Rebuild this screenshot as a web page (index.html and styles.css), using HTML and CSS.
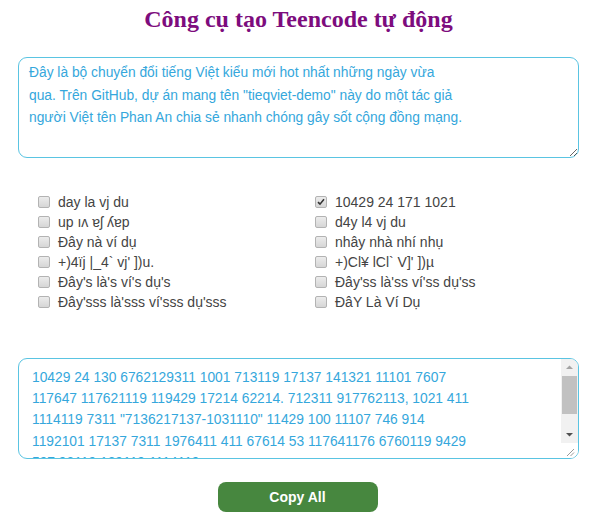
FILE: index.html
```
<!DOCTYPE html>
<html lang="vi">
<head>
<meta charset="utf-8">
<title>Công cụ tạo Teencode tự động</title>
<link rel="stylesheet" href="styles.css">
</head>
<body>
<main class="page">
  <h1 class="title">Công cụ tạo Teencode tự động</h1>
  <textarea class="box box-input">Đây là bộ chuyển đổi tiếng Việt kiểu mới hot nhất những ngày vừa
qua. Trên GitHub, dự án mang tên "tieqviet-demo" này do một tác giả
người Việt tên Phan An chia sẻ nhanh chóng gây sốt cộng đồng mạng.</textarea>

  <div class="options">
    <label class="opt"><input type="checkbox"><span>day la vj du</span></label>
    <label class="opt"><input type="checkbox" checked><span>10429 24 171 1021</span></label>
    <label class="opt"><input type="checkbox"><span>up ıʌ ɐʃ ʎɐp</span></label>
    <label class="opt"><input type="checkbox"><span>d4y l4 vj du</span></label>
    <label class="opt"><input type="checkbox"><span>Đây nà ví dụ</span></label>
    <label class="opt"><input type="checkbox"><span>nhây nhà nhí nhụ</span></label>
    <label class="opt"><input type="checkbox"><span>+)4ïj |_4` vj' ])u.</span></label>
    <label class="opt"><input type="checkbox"><span>+)Cl¥ lCl` V]' ])µ</span></label>
    <label class="opt"><input type="checkbox"><span>Đây's là's ví's dụ's</span></label>
    <label class="opt"><input type="checkbox"><span>Đây'ss là'ss ví'ss dụ'ss</span></label>
    <label class="opt"><input type="checkbox"><span>Đây'sss là'sss ví'sss dụ'sss</span></label>
    <label class="opt"><input type="checkbox"><span>ĐâY Là Ví Dụ</span></label>
  </div>

  <div class="box box-output">
    <textarea class="out-text">10429 24 130 6762129311 1001 713119 17137 141321 11101 7607
117647 117621119 119429 17214 62214. 712311 917762113, 1021 411
1114119 7311 "7136217137-1031110" 11429 100 11107 746 914
1192101 17137 7311 1976411 411 67614 53 117641176 6760119 9429
597 93119 129119 1114119.</textarea>
    <div class="sb" aria-hidden="true">
      <div class="sb-btn">
        <svg width="17" height="17" viewBox="0 0 17 17"><path d="M5 10 L8.5 6.5 L12 10 Z" fill="#a3a3a3"/></svg>
      </div>
      <div class="sb-track"><div class="sb-thumb"></div></div>
      <div class="sb-btn">
        <svg width="17" height="17" viewBox="0 0 17 17"><path d="M5 7 L8.5 10.5 L12 7 Z" fill="#505050"/></svg>
      </div>
      <div class="sb-corner">
        <svg width="15" height="15" viewBox="0 0 15 15"><path d="M13 6 L6 13 M13 9.5 L9.5 13" stroke="#9a9a9a" stroke-width="1" fill="none"/></svg>
      </div>
    </div>
  </div>

  <div class="actions">
    <button class="btn" type="button">Copy All</button>
  </div>
</main>
</body>
</html>
```

FILE: styles.css
```
html, body {
  margin: 0;
  padding: 0;
  background: #ffffff;
}

.page {
  padding: 0 21px 0 18px;
  font-family: "Liberation Sans", Arial, sans-serif;
}

.title {
  margin: 0;
  padding-top: 5px;
  height: 52px;
  box-sizing: border-box;
  text-align: center;
  font-family: "Liberation Serif", "Times New Roman", serif;
  font-weight: bold;
  font-size: 24px;
  line-height: 28px;
  color: #7d0c7d;
}

.box {
  display: block;
  width: 561px;
  height: 101px;
  box-sizing: border-box;
  margin: 0;
  border: 1.5px solid #5ac4e2;
  border-radius: 9px;
  background: #ffffff;
  color: #35a7dc;
  font-family: "Liberation Sans", Arial, sans-serif;
  font-size: 13.8px;
  outline: none;
}

.box-input {
  margin-top: 5px;
  padding: 4px 10px;
  line-height: 22.5px;
  overflow: hidden;
}

.options {
  display: grid;
  grid-template-columns: 277px 1fr;
  grid-auto-rows: 20px;
  padding: 0 0 0 20px;
  margin-top: 34px;
  font-size: 14px;
  color: #444444;
}

.opt {
  display: flex;
  align-items: center;
  gap: 8px;
}

.opt input {
  -webkit-appearance: none;
  appearance: none;
  width: 12px;
  height: 12px;
  margin: 0;
  border: 1px solid #b3b3b3;
  border-radius: 2px;
  background: linear-gradient(#ececec, #d6d6d6);
  flex: none;
}

.opt input:checked {
  background-image: url("data:image/svg+xml,%3Csvg xmlns='http://www.w3.org/2000/svg' viewBox='0 0 12 12'%3E%3Cpath d='M2.4 6.1 L4.8 8.6 L9.6 2.8' fill='none' stroke='%23333' stroke-width='1.9'/%3E%3C/svg%3E"), linear-gradient(#ececec, #d6d6d6);
  background-size: 100% 100%;
}

.box-output {
  margin-top: 46px;
  display: flex;
  overflow: hidden;
}

.out-text {
  flex: 1;
  min-width: 0;
  margin: 0;
  border: none;
  outline: none;
  resize: none;
  overflow: hidden;
  padding: 8px 13px;
  background: transparent;
  color: #35a7dc;
  font-family: "Liberation Sans", Arial, sans-serif;
  font-size: 13.8px;
  line-height: 21.2px;
}

.sb {
  width: 17px;
  flex: none;
  display: flex;
  flex-direction: column;
  background: #f1f1f1;
}

.sb-btn {
  height: 17px;
  flex: none;
}

.sb-btn svg,
.sb-corner svg {
  display: block;
}

.sb-track {
  flex: 1;
  display: flex;
  flex-direction: column;
}

.sb-thumb {
  height: 38px;
  margin: 0 1px;
  background: #c1c1c1;
}

.sb-corner {
  height: 15px;
  flex: none;
  background: #ffffff;
}

.actions {
  display: flex;
  justify-content: center;
  margin-top: 23px;
  padding-right: 2px;
}

.btn {
  width: 160px;
  height: 30px;
  border: none;
  border-radius: 8px;
  background: #47873f;
  color: #ffffff;
  font-family: "Liberation Sans", Arial, sans-serif;
  font-weight: bold;
  font-size: 14px;
  cursor: pointer;
}
```
